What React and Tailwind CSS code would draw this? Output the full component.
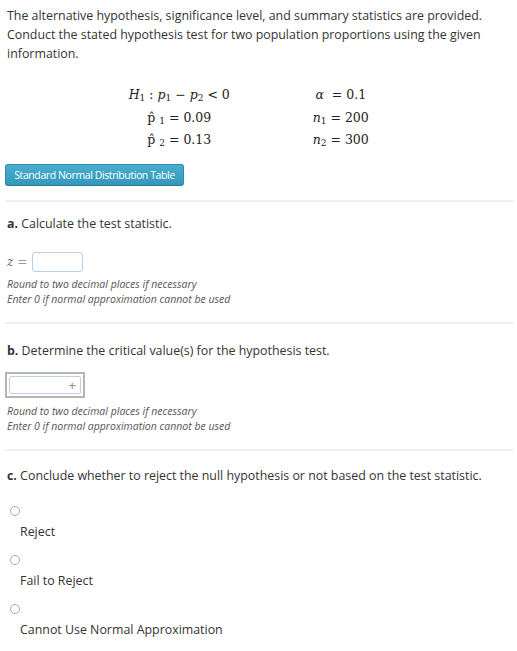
import React from 'react';

const serif = { fontFamily: '"DejaVu Serif", "Liberation Serif", serif' };

const Hints = ({ top }) => (
  <div className={`${top} text-[10.5px] italic leading-[14.5px] text-[#555]`}>
    <div>Round to two decimal places if necessary</div>
    <div>Enter 0 if normal approximation cannot be used</div>
  </div>
);

const Divider = () => <div className="ml-[5px] mr-[4px] h-[2px] bg-[#f0f0f0]" />;

const Radio = ({ label }) => (
  <div className="pl-[10px]">
    <div className="h-[10px] w-[10px] rounded-full border border-[#aaa] bg-white" />
    <div className="mt-[7px] pl-[10px] text-[12.4px] leading-[17px]">{label}</div>
  </div>
);

const App = () => {
  return (
    <div
      className="min-h-[651px] w-[517px] bg-white text-[#333]"
      style={{ fontFamily: '"Open Sans", "Noto Sans", sans-serif' }}
    >
      <div className="px-[7px] pt-[6px] text-[12.4px] leading-[19px]">
        The alternative hypothesis, significance level, and summary statistics are provided.
        Conduct the stated hypothesis test for two population proportions using the given
        information.
      </div>

      <div
        className="mt-[21px] grid grid-cols-[100px_1fr_1fr_100px] text-[12.5px] leading-[22.5px] text-[#222]"
        style={serif}
      >
        <div />
        <div className="text-center">
          <div>
            <i>H</i><sub className="text-[9px]">1</sub> : <i>p</i><sub className="text-[9px]">1</sub> − <i>p</i><sub className="text-[9px]">2</sub> &lt; 0
          </div>
          <div>p̂ <sub className="text-[9px]">1</sub> = 0.09</div>
          <div>p̂ <sub className="text-[9px]">2</sub> = 0.13</div>
        </div>
        <div className="pl-[6px] text-center">
          <div><i>α</i> &nbsp;= 0.1</div>
          <div><i>n</i><sub className="text-[9px]">1</sub> = 200</div>
          <div><i>n</i><sub className="text-[9px]">2</sub> = 300</div>
        </div>
        <div />
      </div>

      <div className="mt-[9px] px-[5px]">
        <button
          className="h-[22px] w-[179px] rounded-[3px] border border-[#2f8bab] border-b-[#24799a] bg-gradient-to-b from-[#48add0] to-[#3498bb] text-[10.5px] tracking-[-0.4px] text-white"
          style={{ fontFamily: '"Liberation Sans Narrow", "Open Sans", sans-serif' }}
        >
          Standard Normal Distribution Table
        </button>
      </div>

      <div className="mt-[14px]">
        <Divider />
      </div>

      <div className="px-[7px] pt-[13px]">
        <div className="text-[12.4px] leading-[17px]">
          <b>a.</b> Calculate the test statistic.
        </div>
        <div className="mt-[20px] flex items-center">
          <span className="text-[12px] italic text-[#666]" style={serif}>
            z <span className="not-italic text-[#999]">=</span>
          </span>
          <div className="ml-[5px] h-[20px] w-[51px] rounded-[3px] border border-[#b9d0ea] bg-white" />
        </div>
        <Hints top="mt-[5px]" />
      </div>

      <div className="mt-[16px]">
        <Divider />
      </div>

      <div className="px-[7px] pt-[18px]">
        <div className="text-[12.4px] leading-[17px]">
          <b>b.</b> Determine the critical value(s) for the hypothesis test.
        </div>
        <div className="ml-[-2px] mt-[13px] w-[80px] border-2 border-[#b5b5b5] p-[2px]">
          <div className="flex h-[18px] items-center justify-end rounded-[2px] border border-[#b9d0ea] pr-[4px] text-[13px] leading-none text-[#888]">
            +
          </div>
        </div>
        <Hints top="mt-[6px]" />
      </div>

      <div className="mt-[16px]">
        <Divider />
      </div>

      <div className="px-[7px] pt-[16px]">
        <div className="text-[12.4px] leading-[17px]">
          <b>c.</b> Conclude whether to reject the null hypothesis or not based on the test statistic.
        </div>
      </div>
      <div className="mt-[22px] flex flex-col gap-[15px] pb-[10px]">
        <Radio label="Reject" />
        <Radio label="Fail to Reject" />
        <Radio label="Cannot Use Normal Approximation" />
      </div>
    </div>
  );
};

export default App;
